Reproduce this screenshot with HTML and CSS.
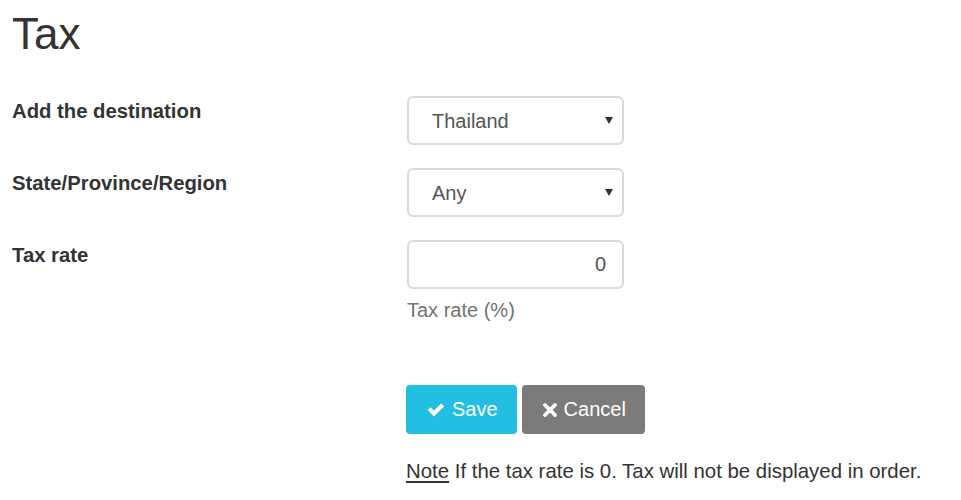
FILE: index.html
```html
<!DOCTYPE html>
<html>
<head>
<meta charset="utf-8">
<link rel="stylesheet" href="styles.css">
</head>
<body>
<div class="page">
  <h1 class="title">Tax</h1>
  <form class="form">
    <div class="row">
      <label class="label">Add the destination</label>
      <div class="control">
        <div class="select-wrap">
          <select class="field select"><option>Thailand</option></select>
        </div>
      </div>
    </div>
    <div class="row">
      <label class="label">State/Province/Region</label>
      <div class="control">
        <div class="select-wrap">
          <select class="field select"><option>Any</option></select>
        </div>
      </div>
    </div>
    <div class="row">
      <label class="label">Tax rate</label>
      <div class="control">
        <input class="field number" type="text" value="0">
        <div class="help">Tax rate (%)</div>
      </div>
    </div>
    <div class="actions">
      <div class="buttons">
        <button type="button" class="btn btn-save">
          <svg class="ico-check" viewBox="0 0 18 14" width="18" height="14"><path d="M0.8 7 L3.6 4.2 L7 7.6 L14.2 0.4 L17.2 3.3 L7 13.5 Z" fill="#fff"/></svg>
          <span>Save</span>
        </button>
        <button type="button" class="btn btn-cancel">
          <svg class="ico-x" viewBox="0 0 14 14" width="14" height="14"><path d="M2 2 L12 12 M12 2 L2 12" stroke="#fff" stroke-width="3.8" stroke-linecap="round" fill="none"/></svg>
          <span>Cancel</span>
        </button>
      </div>
      <p class="note"><u>Note</u> If the tax rate is 0. Tax will not be displayed in order.</p>
    </div>
  </form>
</div>
</body>
</html>
```

FILE: styles.css
```css
html, body {
  margin: 0;
  padding: 0;
  background: #fff;
}
body {
  font-family: "Liberation Sans", Arial, sans-serif;
  font-size: 20px;
  line-height: 1.42857;
  color: #333;
}
.page {
  padding: 0 12px;
}
.title {
  font-size: 44px;
  font-weight: 500;
  line-height: 1.1;
  margin: 10px 0 38px 0;
  color: #333;
}
.form {
  margin: 0;
}
.row {
  display: grid;
  grid-template-columns: 395px 217px;
  margin-bottom: 23px;
}
.label {
  font-weight: bold;
  font-size: 20.3px;
  padding-top: 1px;
  color: #333;
}
.control {
  display: flex;
  flex-direction: column;
}
.select-wrap {
  position: relative;
}
.select-wrap::after {
  content: "";
  position: absolute;
  right: 11px;
  top: 21px;
  border-left: 4.5px solid transparent;
  border-right: 4.5px solid transparent;
  border-top: 7px solid #333;
  pointer-events: none;
}
.field {
  box-sizing: border-box;
  width: 217px;
  height: 49px;
  border: 2px solid #d3dbe3;
  border-radius: 6px;
  background: #fff;
  font-family: "Liberation Sans", Arial, sans-serif;
  font-size: 20px;
  color: #555;
  margin: 0;
  outline: none;
}
.select {
  -webkit-appearance: none;
  appearance: none;
  padding: 0 30px 0 23px;
}
.number {
  text-align: right;
  padding: 0 16px 0 16px;
}
.help {
  margin-top: 7px;
  color: #737373;
  line-height: 28px;
}
.actions {
  padding-left: 394px;
  padding-top: 38px;
}
.buttons {
  display: flex;
  gap: 5px;
}
.btn {
  display: inline-flex;
  align-items: center;
  height: 49px;
  border: none;
  border-radius: 4px;
  font-family: "Liberation Sans", Arial, sans-serif;
  font-size: 20px;
  color: #fff;
  padding: 0 19px 0 21px;
  margin: 0;
  cursor: pointer;
}
.btn-save {
  background: #23bfe2;
  gap: 7px;
}
.btn-cancel {
  background: #7b7b7b;
  gap: 7px;
}
.note {
  margin: 23px 0 0 0;
  font-size: 20.4px;
  color: #333;
}
.note u {
  text-underline-offset: 3px;
}
```
